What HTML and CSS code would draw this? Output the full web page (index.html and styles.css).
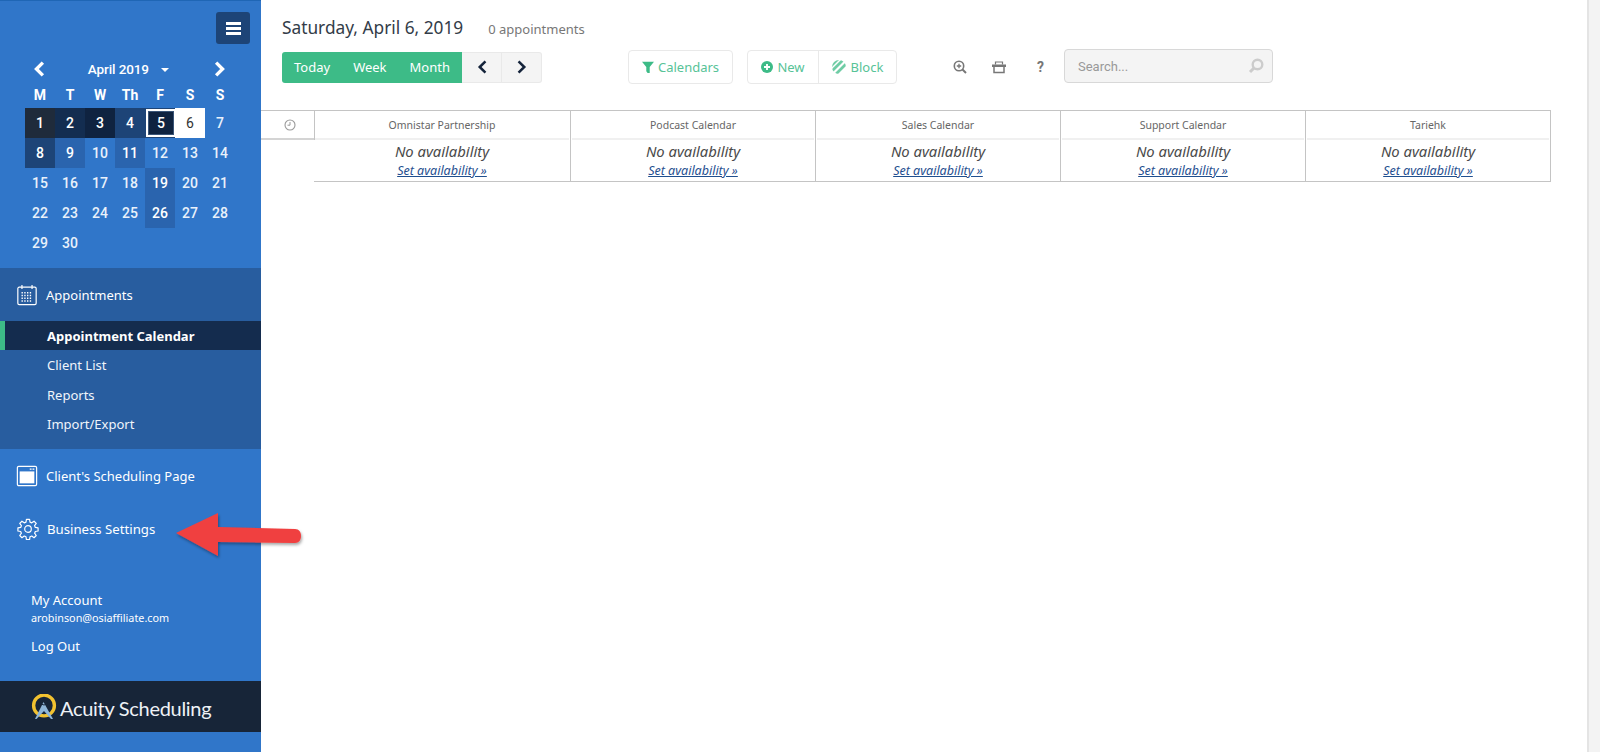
FILE: index.html
```html
<!DOCTYPE html>
<html lang="en">
<head>
<meta charset="utf-8">
<title>Acuity Scheduling</title>
<link rel="stylesheet" href="styles.css">
</head>
<body>
<div class="app">
  <aside class="sidebar">
    <div class="burger-row">
      <button class="burger"><span></span><span></span><span></span></button>
    </div>
    <div class="cal">
      <div class="cal-nav">
        <svg class="chev" viewBox="0 0 12 14"><path d="M9 2 4 7l5 5" /></svg>
        <span class="cal-title">April 2019 <i class="caret"></i></span>
        <svg class="chev" viewBox="0 0 12 14"><path d="M3 2l5 5-5 5" /></svg>
      </div>
      <div class="cal-grid">
        <div class="dow">M</div><div class="dow">T</div><div class="dow">W</div><div class="dow">Th</div><div class="dow">F</div><div class="dow">S</div><div class="dow">S</div>
        <div class="day b d5">1</div><div class="day b d4">2</div><div class="day b d6">3</div><div class="day b d3">4</div><div class="day b today"><span>5</span></div><div class="day sel">6</div><div class="day">7</div>
        <div class="day b d3">8</div><div class="day b d2">9</div><div class="day">10</div><div class="day b d2">11</div><div class="day">12</div><div class="day">13</div><div class="day">14</div>
        <div class="day">15</div><div class="day">16</div><div class="day">17</div><div class="day">18</div><div class="day b d2">19</div><div class="day">20</div><div class="day">21</div>
        <div class="day">22</div><div class="day">23</div><div class="day">24</div><div class="day">25</div><div class="day b d2">26</div><div class="day">27</div><div class="day">28</div>
        <div class="day">29</div><div class="day">30</div>
      </div>
    </div>
    <section class="appts">
      <div class="nav-head">
        <svg class="nav-icon" viewBox="0 0 24 24"><rect x="2" y="3.500" width="20" height="19" rx="1.500" class="st"/><path d="M6.500 1v4.500M17.500 1v4.500" class="st"/><path d="M6 9.500h12M6 12.500h12M6 15.500h12M6 18.500h12" class="dots"/></svg>
        <span>Appointments</span>
      </div>
      <a class="sub active">Appointment Calendar</a>
      <a class="sub">Client List</a>
      <a class="sub">Reports</a>
      <a class="sub">Import/Export</a>
    </section>
    <div class="nav-item sched">
      <svg class="nav-icon" viewBox="0 0 24 24"><rect x="1.500" y="1.500" width="21" height="21" rx="1.500" class="st"/><rect x="4" y="7" width="16" height="13" fill="#fff"/><path d="M15 4.500h2M18 4.500h2" class="st"/></svg>
      <span>Client's Scheduling Page</span>
    </div>
    <div class="nav-item settings">
      <svg class="nav-icon" viewBox="0 0 24 24"><path class="st" stroke-linejoin="round" d="M10.300 1.500h3.400l.5 3 1.900.8 2.500-1.800 2.400 2.400-1.800 2.500.8 1.900 3 .5v3.400l-3 .5-.8 1.900 1.800 2.500-2.400 2.400-2.500-1.800-1.900.8-.5 3h-3.400l-.5-3-1.900-.8-2.500 1.800-2.400-2.400 1.800-2.500-.8-1.900-3-.5v-3.400l3-.5.8-1.900-1.800-2.500 2.400-2.400 2.500 1.800 1.900-.8z"/><circle cx="12" cy="12" r="3.600" class="st"/></svg>
      <span>Business Settings</span>
    </div>
    <div class="account">
      <div class="acc-name">My Account</div>
      <div class="acc-mail">arobinson@osiaffiliate.com</div>
      <div class="acc-out">Log Out</div>
    </div>
    <div class="brand">
      <svg class="logo" viewBox="0 0 26 26"><circle cx="13" cy="11.500" r="10.400" fill="none" stroke="#f2c230" stroke-width="3.400"/><circle cx="13" cy="9" r="3.500" fill="#172538"/><path d="M12.500 8 4 25h1.500l7.500-8 7 8h2z" fill="#8fb6d8"/><circle cx="13" cy="8" r="3" fill="none" stroke="#172538" stroke-width="1"/></svg>
      <span class="brand-name">Acuity Scheduling</span>
    </div>
    <svg class="arrow" viewBox="0 0 132 52"><defs><filter id="sh" x="-10%" y="-10%" width="120%" height="130%"><feDropShadow dx="1" dy="2" stdDeviation="1.500" flood-color="#000" flood-opacity=".35"/></filter></defs><path d="M1 22 43 2v14l77 2c4 0 6 3 6 7s-2 7-6 7l-77-1v14z" fill="#f04040" filter="url(#sh)"/></svg>
  </aside>
  <main class="main">
    <div class="title-row">
      <h1>Saturday, April 6, 2019</h1>
      <span class="count">0 appointments</span>
    </div>
    <div class="toolbar">
      <div class="range">
        <div class="views"><a>Today</a><a>Week</a><a>Month</a></div>
        <a class="arrow-btn"><svg viewBox="0 0 12 14"><path d="M9 2 4 7l5 5"/></svg></a>
        <a class="arrow-btn last"><svg viewBox="0 0 12 14"><path d="M3 2l5 5-5 5"/></svg></a>
      </div>
      <a class="btn cals"><svg class="ic" viewBox="0 0 14 14"><path d="M0 1h14L9 7v7H6.500L5 12V7z" fill="#3dbb87"/></svg>Calendars</a>
      <div class="btn-group">
        <a class="btn-in"><svg class="ic" viewBox="0 0 14 14"><circle cx="7" cy="7" r="7" fill="#3dbb87"/><path d="M7 3.500v7M3.500 7h7" stroke="#fff" stroke-width="2.200"/></svg>New</a>
        <a class="btn-in sep"><svg class="ic wide" viewBox="0 0 14 14"><clipPath id="blk"><circle cx="7" cy="7" r="7"/></clipPath><g clip-path="url(#blk)"><path d="M-1 6 6-1M-1 12 12-1M3 15 15 3" stroke="#6fcca5" stroke-width="2.800" fill="none"/></g></svg>Block</a>
      </div>
      <div class="tools">
        <svg class="tool" viewBox="0 0 14 14"><circle cx="6" cy="6" r="4.700" fill="none" stroke="#777" stroke-width="1.600"/><path d="M9.500 9.500 13 13" stroke="#777" stroke-width="2"/><path d="M3.800 6h4.400M6 3.800v4.400" stroke="#777" stroke-width="1.300"/></svg>
        <svg class="tool" viewBox="0 0 14 14"><path d="M3.500 4.500V2h7v2.500" fill="none" stroke="#777" stroke-width="1.200"/><rect x="0" y="4.500" width="14" height="2.500" fill="#777"/><path d="M2 7v5.500h10V7" fill="none" stroke="#777" stroke-width="1.500"/></svg>
        <span class="help">?</span>
      </div>
      <div class="search">
        <span>Search...</span>
        <svg class="s-ic" viewBox="0 0 16 16"><circle cx="9.500" cy="6.500" r="4.800" fill="none" stroke="#ccc" stroke-width="2.400"/><path d="M6 10 2 14" stroke="#ccc" stroke-width="3"/></svg>
      </div>
    </div>
    <div class="sched-table">
      <div class="clock-col"><svg viewBox="0 0 12 12"><circle cx="6" cy="6" r="5" fill="none" stroke="#999" stroke-width="1.100"/><path d="M6 3v3.200H3.500" fill="none" stroke="#999"/></svg></div>
      <div class="column first"><div class="col-h">Omnistar Partnership</div><div class="col-b"><em>No availability</em><a>Set availability »</a></div></div>
      <div class="column"><div class="col-h">Podcast Calendar</div><div class="col-b"><em>No availability</em><a>Set availability »</a></div></div>
      <div class="column"><div class="col-h">Sales Calendar</div><div class="col-b"><em>No availability</em><a>Set availability »</a></div></div>
      <div class="column"><div class="col-h">Support Calendar</div><div class="col-b"><em>No availability</em><a>Set availability »</a></div></div>
      <div class="column"><div class="col-h">Tariehk</div><div class="col-b"><em>No availability</em><a>Set availability »</a></div></div>
    </div>
  </main>
  <div class="scrollbar"></div>
</div>
</body>
</html>
```
FILE: styles.css
```css
* { box-sizing: border-box; }
html, body { margin: 0; height: 100%; overflow: hidden; }
body { font-family: "Noto Sans", sans-serif; background: #fff; color: #333; }
.app { display: flex; height: 752px; }
.sidebar { position: relative; width: 261px; flex: none; background: #3076c9; color: #fff; display: flex; flex-direction: column; border-top: 1px solid #1f66b5; }
.burger-row { display: flex; justify-content: flex-end; padding: 11px 11px 0 0; }
.burger { width: 34px; height: 32px; background: #1d4477; border: 0; border-radius: 3px; display: flex; flex-direction: column; justify-content: center; align-items: center; gap: 2px; padding: 0; }
.burger span { width: 15px; height: 3px; background: #fff; }
.cal { padding: 0 0 0 25px; height: 224px; }
.cal-nav { display: flex; justify-content: space-between; align-items: center; width: 210px; height: 24px; margin-top: 13px; padding: 0 7px 0 6px; }
.chev { width: 16px; height: 18px; fill: none; stroke: #fff; stroke-width: 2.600; }
.cal-title { font: 500 13.500px "Roboto", sans-serif; letter-spacing: -.1px; margin-right: 2px; }
.caret { display: inline-block; margin-left: 9px; vertical-align: middle; border: 4px solid transparent; border-top-color: #fff; border-bottom: 0; }
.cal-grid { display: grid; grid-template-columns: repeat(7, 30px); grid-template-rows: 24px; grid-auto-rows: 30px; margin-top: 3px; font: 500 14px "Roboto", sans-serif; }
.dow { display: flex; align-items: center; justify-content: center; font-weight: 700; height: 22px; font-size: 14px; }
.day { display: flex; align-items: center; justify-content: center; color: #e9f1fb; }
.day.b { color: #fff; }
.d2 { background: #2a64ae; }
.d3 { background: #1d4477; }
.d4 { background: #132d50; }
.d5 { background: #1f2b3b; }
.d6 { background: #0f2340; }
.today { background: #fff; padding: 2px 0 2px 2px; border: 1px solid #1d4477; border-right: 0; }
.today span { width: 100%; height: 100%; background: #0f2340; border: 1px solid #3a5578; display: flex; align-items: center; justify-content: center; margin-right: 1px; }
.sel { background: #fff; color: #333; font-weight: 400; }
.appts { background: #285d9f; height: 181px; display: flex; flex-direction: column; }
.nav-head, .nav-item { display: flex; align-items: center; gap: 8px; padding-left: 16px; font: 400 13px "Noto Sans", sans-serif; color: #fff; }
.nav-head { height: 53px; }
.nav-icon { width: 22px; height: 22px; flex: none; }
.st { fill: none; stroke: #fff; stroke-width: 1.300; }
.dots { fill: none; stroke: #fff; stroke-width: 1.500; stroke-dasharray: 1.500 1.500; }
.sub { display: flex; align-items: center; height: 29.700px; padding-left: 47px; font: 400 13px "Noto Sans", sans-serif; color: #f0f5fb; }
.sub.active { background: #142c4e; color: #fff; font-weight: 700; height: 29px; border-left: 5px solid #3dbb87; padding-left: 42px; }
.nav-item.sched { height: 54px; }
.nav-item.settings { height: 52px; padding-left: 17px; font-size: 13.200px; }
.account { padding: 36px 0 0 31px; font: 400 13px "Noto Sans", sans-serif; }
.acc-mail { font-size: 10.800px; margin-top: 1px; line-height: 16px; }
.acc-out { margin-top: 11px; }
.brand { display: flex; align-items: center; gap: 3px; position: absolute; left: 0; right: 0; top: 680px; height: 51px; background: #172538; padding-left: 31px; }
.logo { width: 26px; height: 26px; margin-top: 1px; }
.brand-name { font: 400 20px "Lato", sans-serif; color: #eef2f6; letter-spacing: -.3px; margin-top: 3px; }
.arrow { position: absolute; left: 175px; top: 510px; width: 132px; height: 52px; z-index: 2; overflow: visible; }
.main { flex: 1; min-width: 0; padding-top: 16px; }
.title-row { display: flex; align-items: baseline; padding-left: 21px; }
h1 { margin: 0; font: 400 17.300px "Noto Sans", sans-serif; color: #333c48; }
.count { margin-left: 25px; font-size: 13px; color: #777; }
.toolbar { display: flex; align-items: center; padding-left: 21px; margin-top: 10px; height: 36px; }
.range { display: flex; height: 31px; width: 260px; font-size: 13px; }
.views { display: flex; align-items: center; justify-content: space-between; background: #3dbb87; color: #fff; width: 180px; border-radius: 3px 0 0 3px; padding: 0 12px; }
.arrow-btn { flex: 1; display: flex; align-items: center; justify-content: center; background: #f4f4f4; border: 1px solid #e9e9e9; border-left: 0; }
.arrow-btn.last { border-radius: 0 3px 3px 0; }
.arrow-btn svg { width: 14px; height: 16px; fill: none; stroke: #14233a; stroke-width: 2.200; }
.btn, .btn-group { display: flex; height: 34px; align-items: center; border: 1px solid #e9e9e9; border-radius: 4px; font-size: 13px; color: #57c397; }
.btn { margin-left: 86px; width: 105px; justify-content: center; }
.ic { width: 12px; height: 12px; margin-right: 4px; flex: none; }
.ic.wide { width: 14px; height: 14px; margin-right: 5px; }
.btn-group { margin-left: 14px; width: 150px; }
.btn-in { display: flex; align-items: center; justify-content: center; height: 100%; width: 70px; }
.btn-in.sep { flex: 1; border-left: 1px solid #e9e9e9; }
.tools { display: flex; align-items: center; margin-left: 56px; width: 115px; gap: 25px; padding-left: 0; }
.tool { width: 14px; height: 14px; flex: none; }
.help { font: 700 14px "Roboto", sans-serif; color: #777; margin-left: 6px; }
.search { display: flex; align-items: center; justify-content: space-between; width: 209px; height: 34px; background: #f4f4f4; border: 1px solid #d8d8d8; border-radius: 4px; padding: 0 8px 0 13px; font: 400 13px "Roboto", sans-serif; color: #999; margin: 0 0 2px -4px; }
.s-ic { width: 16px; height: 16px; }
.sched-table { display: flex; margin-top: 25px; width: 1291px; }
.clock-col { width: 53px; height: 30px; border-top: 1px solid #c4c4c4; border-bottom: 2px solid #d4d4d4; display: flex; align-items: center; justify-content: center; }
.clock-col svg { width: 12px; height: 12px; margin-left: 5px; }
.column { width: 245px; height: 72px; border-top: 1px solid #c4c4c4; border-bottom: 1px solid #c4c4c4; border-right: 1px solid #c4c4c4; text-align: center; }
.column.first { width: 257px; }
.column.first .col-h { box-shadow: -1px 0 0 #c4c4c4; }
.col-h { height: 29px; font-size: 10.500px; line-height: 28px; color: #666; border-bottom: 2px solid #f0f0f0; margin: 0 1px; }
.col-b { display: flex; flex-direction: column; align-items: center; font-size: 14.800px; }
.col-b em { color: #4a4a4a; line-height: 22px; }
.col-b a { font-size: 12.500px; font-style: italic; color: #1f4f8f; text-decoration: underline; line-height: 16px; margin-top: 1px; }
.scrollbar { position: absolute; right: 0; top: 0; width: 13px; height: 752px; background: #f3f3f3; border-left: 2px solid #e4e4e4; }
```
